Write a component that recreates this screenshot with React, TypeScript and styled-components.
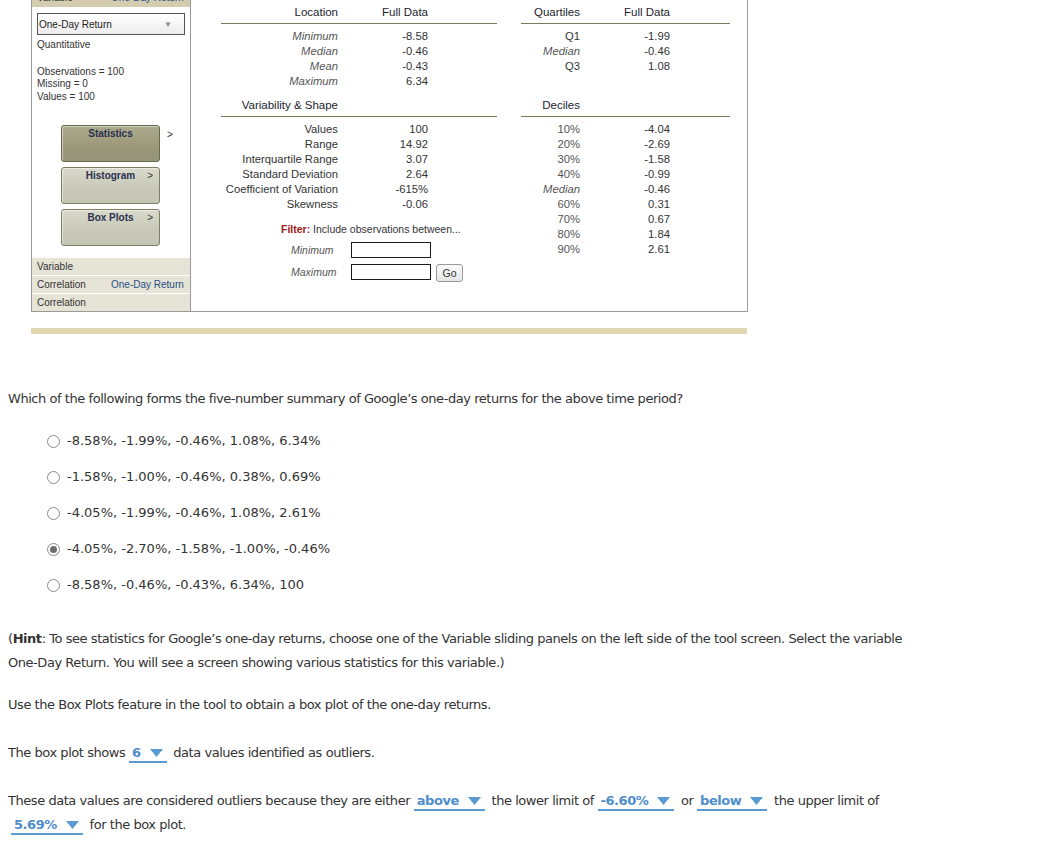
import React from "react";
import styled, { createGlobalStyle } from "styled-components";

const GlobalStyle = createGlobalStyle`
  html, body {
    margin: 0;
    padding: 0;
    background: #ffffff;
  }
  body {
    font-family: "DejaVu Sans", Verdana, sans-serif;
    font-size: 13px;
    color: #333333;
  }
`;

type Stat = { label: string; value: string; italic?: boolean };

const location: Stat[] = [
  { label: "Minimum", value: "-8.58", italic: true },
  { label: "Median", value: "-0.46", italic: true },
  { label: "Mean", value: "-0.43", italic: true },
  { label: "Maximum", value: "6.34", italic: true },
];

const quartiles: Stat[] = [
  { label: "Q1", value: "-1.99" },
  { label: "Median", value: "-0.46", italic: true },
  { label: "Q3", value: "1.08" },
];

const variability: Stat[] = [
  { label: "Values", value: "100" },
  { label: "Range", value: "14.92" },
  { label: "Interquartile Range", value: "3.07" },
  { label: "Standard Deviation", value: "2.64" },
  { label: "Coefficient of Variation", value: "-615%" },
  { label: "Skewness", value: "-0.06" },
];

const deciles: Stat[] = [
  { label: "10%", value: "-4.04" },
  { label: "20%", value: "-2.69" },
  { label: "30%", value: "-1.58" },
  { label: "40%", value: "-0.99" },
  { label: "Median", value: "-0.46", italic: true },
  { label: "60%", value: "0.31" },
  { label: "70%", value: "0.67" },
  { label: "80%", value: "1.84" },
  { label: "90%", value: "2.61" },
];

const options = [
  "-8.58%, -1.99%, -0.46%, 1.08%, 6.34%",
  "-1.58%, -1.00%, -0.46%, 0.38%, 0.69%",
  "-4.05%, -1.99%, -0.46%, 1.08%, 2.61%",
  "-4.05%, -2.70%, -1.58%, -1.00%, -0.46%",
  "-8.58%, -0.46%, -0.43%, 6.34%, 100",
];

const LEFT_COLS = "117px 90px";
const RIGHT_COLS = "59px 90px";

const Page = styled.div`
  padding: 0 8px 10px;
`;

const Tool = styled.div`
  display: flex;
  width: 717px;
  height: 324px;
  margin: -12px 0 0 23px;
  font-family: "Liberation Sans", Arial, sans-serif;
  color: #333;
`;

const SidePanel = styled.div`
  width: 158px;
  border-left: 1px solid #9a9a9a;
  border-right: 1px solid #9a9a9a;
  border-bottom: 1px solid #9a9a9a;
  display: flex;
  flex-direction: column;
  font-size: 10px;
`;

const SideHeader = styled.div`
  height: 19px;
  background: #d3ccae;
  display: flex;
  align-items: center;
  padding-left: 5px;
`;

const HeaderCell = styled.span<{ $link?: boolean }>`
  width: ${(p) => (p.$link ? "auto" : "74px")};
  color: ${(p) => (p.$link ? "#1f4f82" : "#333")};
`;

const SelectBox = styled.div`
  margin: 6px 5px 0;
  height: 22px;
  box-sizing: border-box;
  border: 1px solid #555;
  background: linear-gradient(#ffffff, #ececec);
  display: flex;
  align-items: center;
  justify-content: space-between;
  padding: 0 12px 0 1px;
  color: #222;
`;

const Arrow = styled.span`
  font-size: 8px;
  color: #8a8a8a;
`;

const InfoLine = styled.div<{ $top?: number }>`
  margin-top: ${(p) => p.$top ?? 0}px;
  padding-left: 5px;
  line-height: 12.5px;
`;

const ButtonStack = styled.div`
  margin-top: 21.5px;
  padding-left: 29px;
  display: flex;
  flex-direction: column;
  gap: 5px;
`;

const ButtonRow = styled.div`
  display: flex;
  align-items: flex-start;
`;

const PanelButton = styled.div<{ $active?: boolean }>`
  width: 99px;
  height: 37px;
  box-sizing: border-box;
  border: 1px solid ${(p) => (p.$active ? "#6a694b" : "#7e7d60")};
  border-radius: 3px;
  background: ${(p) =>
    p.$active
      ? "linear-gradient(#adab8e, #9a9878 60%, #97957a)"
      : "linear-gradient(#dadacc, #c8c8b8 60%, #c5c5b5)"};
  box-shadow: inset 1px 1px 0 rgba(255, 255, 255, 0.45);
  display: grid;
  grid-template-columns: 1fr auto 1fr;
  align-items: start;
  padding: 2px 6px 0;
  font-weight: bold;
  line-height: 12px;
  color: #2a3050;
`;

const Chevron = styled.span<{ $outside?: boolean }>`
  justify-self: end;
  font-weight: normal;
  color: #333;
  margin: ${(p) => (p.$outside ? "4px 0 0 7px" : "0")};
`;

const SideRows = styled.div`
  margin-top: auto;
`;

const SideRow = styled.div`
  height: 17px;
  border-top: 1px solid #ffffff;
  background: #e6e3d7;
  display: flex;
  align-items: center;
  padding-left: 5px;
`;

const MainPanel = styled.div`
  flex: 1;
  border-right: 1px solid #9a9a9a;
  border-bottom: 1px solid #9a9a9a;
  padding: 17.5px 0 0 30px;
  display: grid;
  grid-template-columns: 276px 209px;
  column-gap: 24px;
  align-content: start;
  font-size: 11.25px;
`;

const SectionHeader = styled.div<{ $cols: string; $top?: number }>`
  display: grid;
  grid-template-columns: ${(p) => p.$cols};
  margin-top: ${(p) => p.$top ?? 0}px;
  line-height: 13px;
  padding-bottom: 4px;
  border-bottom: 1px solid #7b7b5e;
  font-size: 11.5px;
  color: #1d1d2e;
  & > span {
    text-align: right;
  }
`;

const StatGrid = styled.div<{ $cols: string }>`
  display: grid;
  grid-template-columns: ${(p) => p.$cols};
  margin-top: 5px;
  line-height: 15px;
  align-content: start;
`;

const StatLabel = styled.span<{ $italic?: boolean; $muted?: boolean }>`
  text-align: right;
  font-style: ${(p) => (p.$italic ? "italic" : "normal")};
  color: ${(p) => (p.$muted || p.$italic ? "#555" : "#333")};
`;

const StatValue = styled.span`
  text-align: right;
  color: #333;
`;

const FilterNote = styled.div`
  margin-top: 11px;
  padding-left: 60px;
  line-height: 13px;
  font-size: 10.5px;
  color: #333;
  & > b {
    color: #a31818;
  }
`;

const FilterRow = styled.div<{ $top: number }>`
  display: flex;
  align-items: flex-start;
  margin-top: ${(p) => p.$top}px;
  padding-left: 70px;
`;

const FilterLabel = styled.span`
  width: 60px;
  line-height: 16px;
  font-size: 10.5px;
  font-style: italic;
  color: #555;
`;

const FilterInput = styled.div`
  width: 80px;
  height: 16px;
  box-sizing: border-box;
  border: 1px solid #1a1a1a;
  background: #fff;
`;

const GoButton = styled.button`
  margin-left: 5px;
  width: 27px;
  height: 18px;
  padding: 0;
  box-sizing: border-box;
  border: 1px solid #9a9a9a;
  border-radius: 3px;
  background: linear-gradient(#fbfbfb, #e6e6e6);
  font-family: "Liberation Sans", Arial, sans-serif;
  font-size: 10.5px;
  color: #333;
`;

const TanBar = styled.div`
  width: 716px;
  height: 6px;
  margin: 16px 0 0 23px;
  background: #e0d7b0;
`;

const Content = styled.div`
  max-width: 905px;
  line-height: 24px;
  letter-spacing: -0.45px;
  color: #333;
`;

const Block = styled.div<{ $top: number }>`
  margin-top: ${(p) => p.$top}px;
`;

const OptionList = styled.div`
  margin-top: 12px;
  letter-spacing: 0;
`;

const Option = styled.div`
  height: 36px;
  display: flex;
  align-items: center;
  padding-left: 39px;
`;

const Radio = styled.span<{ $checked?: boolean }>`
  width: 13px;
  height: 13px;
  box-sizing: border-box;
  border-radius: 50%;
  border: 1px solid #8c8c8c;
  background: #fff;
  margin-right: 7px;
  display: flex;
  align-items: center;
  justify-content: center;
  &::after {
    content: "";
    display: ${(p) => (p.$checked ? "block" : "none")};
    width: 7px;
    height: 7px;
    border-radius: 50%;
    background: #6e6e6e;
  }
`;

const Dropdown = styled.span<{ $lead?: boolean }>`
  display: inline-flex;
  align-items: center;
  gap: 9px;
  line-height: 17px;
  padding: 0 4px 0 3px;
  margin: 0 3px 0 ${(p) => (p.$lead ? "3px" : "0")};
  border-bottom: 2px solid #5a9ad3;
  font-weight: bold;
  color: #4f8dcb;
`;

const Caret = () => (
  <svg width="13" height="8" viewBox="0 0 13 8">
    <polygon points="0,0 13,0 6.5,8" fill="#5a9ad3" />
  </svg>
);

const Choice = ({ value, lead }: { value: string; lead?: boolean }) => (
  <Dropdown $lead={lead}>
    {value}
    <Caret />
  </Dropdown>
);

const sideButtons = [
  { label: "Statistics", active: true },
  { label: "Histogram" },
  { label: "Box Plots" },
];

const StatRows = ({ rows, cols, muted }: { rows: Stat[]; cols: string; muted?: boolean }) => (
  <StatGrid $cols={cols}>
    {rows.map((s) => (
      <React.Fragment key={s.label}>
        <StatLabel $italic={s.italic} $muted={muted}>
          {s.label}
        </StatLabel>
        <StatValue>{s.value}</StatValue>
      </React.Fragment>
    ))}
  </StatGrid>
);

const App = () => {
  return (
    <Page>
      <GlobalStyle />
      <Tool>
        <SidePanel>
          <SideHeader>
            <HeaderCell>Variable</HeaderCell>
            <HeaderCell $link>One-Day Return</HeaderCell>
          </SideHeader>
          <SelectBox>
            <span>One-Day Return</span>
            <Arrow>▼</Arrow>
          </SelectBox>
          <InfoLine $top={4}>Quantitative</InfoLine>
          <InfoLine $top={14}>Observations = 100</InfoLine>
          <InfoLine>Missing = 0</InfoLine>
          <InfoLine>Values = 100</InfoLine>
          <ButtonStack>
            {sideButtons.map((b) => (
              <ButtonRow key={b.label}>
                <PanelButton $active={b.active}>
                  <span />
                  <span>{b.label}</span>
                  {!b.active && <Chevron>&gt;</Chevron>}
                </PanelButton>
                {b.active && <Chevron $outside>&gt;</Chevron>}
              </ButtonRow>
            ))}
          </ButtonStack>
          <SideRows>
            <SideRow>Variable</SideRow>
            <SideRow>
              <HeaderCell>Correlation</HeaderCell>
              <HeaderCell $link>One-Day Return</HeaderCell>
            </SideRow>
            <SideRow>Correlation</SideRow>
          </SideRows>
        </SidePanel>

        <MainPanel>
          <SectionHeader $cols={LEFT_COLS}>
            <span>Location</span>
            <span>Full Data</span>
          </SectionHeader>
          <SectionHeader $cols={RIGHT_COLS}>
            <span>Quartiles</span>
            <span>Full Data</span>
          </SectionHeader>

          <StatRows rows={location} cols={LEFT_COLS} />
          <StatRows rows={quartiles} cols={RIGHT_COLS} />

          <SectionHeader $cols={LEFT_COLS} $top={10}>
            <span>Variability &amp; Shape</span>
          </SectionHeader>
          <SectionHeader $cols={RIGHT_COLS} $top={10}>
            <span>Deciles</span>
          </SectionHeader>

          <div>
            <StatRows rows={variability} cols={LEFT_COLS} />
            <FilterNote>
              <b>Filter:</b> Include observations between...
            </FilterNote>
            <FilterRow $top={6.5}>
              <FilterLabel>Minimum</FilterLabel>
              <FilterInput />
            </FilterRow>
            <FilterRow $top={6}>
              <FilterLabel>Maximum</FilterLabel>
              <FilterInput />
              <GoButton>Go</GoButton>
            </FilterRow>
          </div>
          <StatRows rows={deciles} cols={RIGHT_COLS} muted />
        </MainPanel>
      </Tool>
      <TanBar />

      <Content>
        <Block $top={53}>
          Which of the following forms the five-number summary of Google’s
          one-day returns for the above time period?
        </Block>
        <OptionList>
          {options.map((o, i) => (
            <Option key={o}>
              <Radio $checked={i === 3} />
              {o}
            </Option>
          ))}
        </OptionList>
        <Block $top={24}>
          (<b>Hint</b>: To see statistics for Google’s one-day returns, choose
          one of the Variable sliding panels on the left side of the tool
          screen. Select the variable One&#8209;Day Return. You will see a
          screen showing various statistics for this variable.)
        </Block>
        <Block $top={18}>
          Use the Box Plots feature in the tool to obtain a box plot of the
          one-day returns.
        </Block>
        <Block $top={24}>
          The box plot shows <Choice value="6" /> data values identified as
          outliers.
        </Block>
        <Block $top={24}>
          These data values are considered outliers because they are either{" "}
          <Choice value="above" /> the lower limit of <Choice value="-6.60%" />{" "}
          or <Choice value="below" /> the upper limit of{" "}
          <Choice value="5.69%" lead /> for the box plot.
        </Block>
      </Content>
    </Page>
  );
};

export default App;
